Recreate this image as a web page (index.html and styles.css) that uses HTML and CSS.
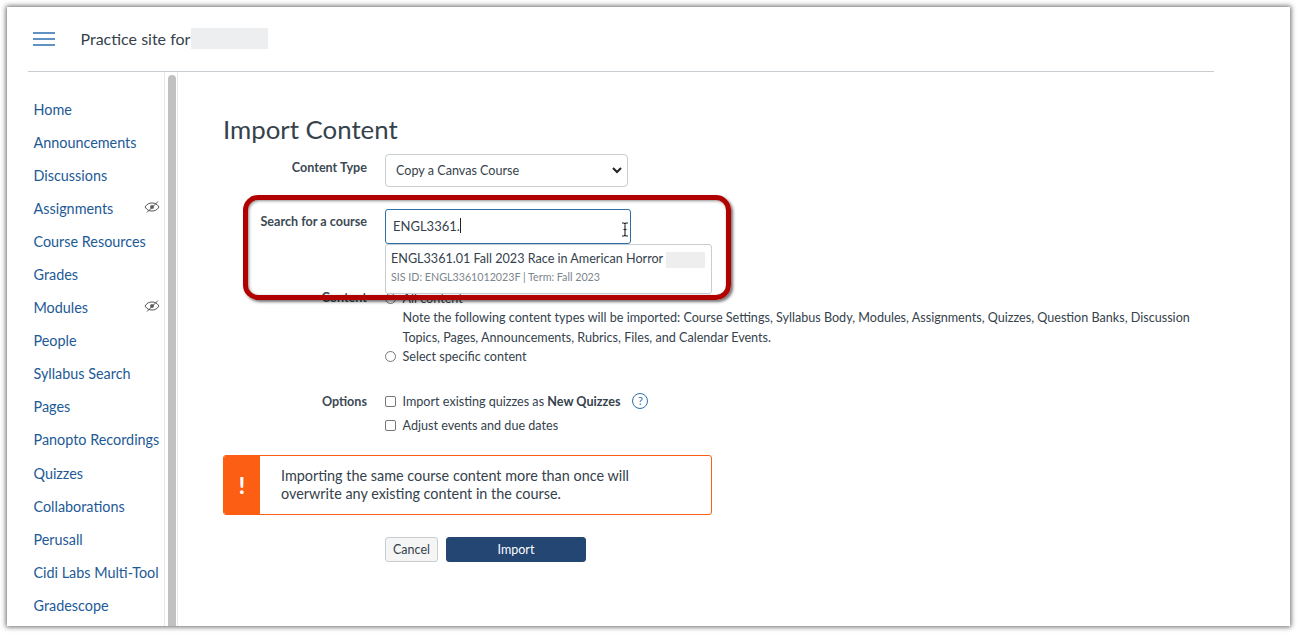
FILE: index.html
```html
<!DOCTYPE html>
<html lang="en">
<head>
<meta charset="utf-8">
<title>Import Content</title>
<link rel="stylesheet" href="styles.css">
</head>
<body>
<div class="window">
  <header class="topbar">
    <svg class="burger" width="22" height="14" viewBox="0 0 22 14"><path d="M0 1h22M0 7h22M0 13h22" stroke="#2d6fb0" stroke-width="1.5" fill="none"/></svg>
    <span class="crumb">Practice site for</span><span class="blur-name"></span>
  </header>
  <div class="layout">
    <nav class="sidebar">
      <a class="nav-item">Home</a>
      <a class="nav-item">Announcements</a>
      <a class="nav-item">Discussions</a>
      <a class="nav-item">Assignments<svg class="eye" width="16" height="14" viewBox="0 0 16 14"><path d="M1 7c2-3 4-4 7-4s5 1 7 4c-2 3-4 4-7 4S3 10 1 7z" fill="none" stroke="#555" stroke-width="1"/><circle cx="8" cy="7" r="2" fill="#666"/><path d="M3 12.500L14 1.500" stroke="#555" stroke-width="1"/></svg></a>
      <a class="nav-item">Course Resources</a>
      <a class="nav-item">Grades</a>
      <a class="nav-item">Modules<svg class="eye" width="16" height="14" viewBox="0 0 16 14"><path d="M1 7c2-3 4-4 7-4s5 1 7 4c-2 3-4 4-7 4S3 10 1 7z" fill="none" stroke="#555" stroke-width="1"/><circle cx="8" cy="7" r="2" fill="#666"/><path d="M3 12.500L14 1.500" stroke="#555" stroke-width="1"/></svg></a>
      <a class="nav-item">People</a>
      <a class="nav-item">Syllabus Search</a>
      <a class="nav-item">Pages</a>
      <a class="nav-item">Panopto Recordings</a>
      <a class="nav-item">Quizzes</a>
      <a class="nav-item">Collaborations</a>
      <a class="nav-item">Perusall</a>
      <a class="nav-item">Cidi Labs Multi-Tool</a>
      <a class="nav-item">Gradescope</a>
    </nav>
    <div class="scrolltrack"><div class="scrollthumb"></div></div>
    <main class="main">
      <h1 class="title">Import Content</h1>
      <div class="row row-type">
        <div class="label">Content Type</div>
        <div class="select">Copy a Canvas Course<svg width="10" height="7" viewBox="0 0 10 7"><path d="M1 1l4 4 4-4" fill="none" stroke="#222" stroke-width="2"/></svg></div>
      </div>
      <div class="row row-search">
        <div class="label">Search for a course</div>
        <div class="search-wrap">
          <div class="input"><span>ENGL3361.</span><i class="caret"></i>
            <svg class="ibeam" width="8" height="15" viewBox="0 0 8 15"><path d="M1 1h2l1 1 1-1h2M4 2v11M1 14h2l1-1 1 1h2M2.500 7.500h3" fill="none" stroke="#222" stroke-width="1.100"/></svg>
          </div>
          <div class="dropdown">
            <div class="dd-title">ENGL3361.01 Fall 2023 Race in American Horror<span class="blur-tag"></span></div>
            <div class="dd-sub">SIS ID: ENGL3361012023F | Term: Fall 2023</div>
          </div>
        </div>
      </div>
      <div class="row row-content">
        <div class="label">Content</div>
        <div class="stack">
          <label class="check"><span class="radio"></span>All content</label>
          <p class="note">Note the following content types will be imported: Course Settings, Syllabus Body, Modules, Assignments, Quizzes, Question Banks, Discussion Topics, Pages, Announcements, Rubrics, Files, and Calendar Events.</p>
          <label class="check"><span class="radio"></span>Select specific content</label>
        </div>
      </div>
      <div class="row row-options">
        <div class="label">Options</div>
        <div class="stack">
          <label class="check"><span class="box"></span>Import existing quizzes as&nbsp;<b>New Quizzes</b><span class="help">?</span></label>
          <label class="check check-adjust"><span class="box"></span>Adjust events and due dates</label>
        </div>
      </div>
      <div class="alert">
        <div class="alert-icon">!</div>
        <div class="alert-text">Importing the same course content more than once will overwrite any existing content in the course.</div>
      </div>
      <div class="actions">
        <button class="btn">Cancel</button>
        <button class="btn primary">Import</button>
      </div>
    </main>
  </div>
  <div class="callout"></div>
</div>
</body>
</html>
```
FILE: styles.css
```css
* { box-sizing: border-box; }
html, body { margin: 0; padding: 0; height: 100%; overflow: hidden; background: #fff; }
body { font-family: Lato, "Liberation Sans", sans-serif; color: #35424c; padding: 7px 7px 6px 7px; }
.window { position: relative; width: 1283px; height: 619px; background: #fff; overflow: hidden; box-shadow: 0 0 5px 1px rgba(0,0,0,.6); }
.topbar { height: 65px; margin-left: 21px; width: 1186px; border-bottom: 1px solid #c7cdd1; display: flex; align-items: center; padding-left: 5px; }
.burger { margin-right: 25.500px; flex: none; }
.crumb { font-size: 16px; margin-top: -2px; }
.blur-name { width: 77px; height: 21px; margin: -2px 0 0 0.500px; background: #eceeef; }
.layout { display: flex; height: 554px; margin-left: 21px; }
.sidebar { width: 137px; padding: 21px 0 0 5.500px; border-right: 1px solid #e6e8ea; flex: none; }
.nav-item { display: flex; justify-content: space-between; height: 33.050px; line-height: 33px; font-size: 14.380px; color: #1d5a96; white-space: nowrap; padding-right: 4.500px; }
.eye { margin-top: 8px; }
.scrolltrack { width: 13px; flex: none; padding: 3px 1px 0 3px; border-right: 1px solid #e6e8ea; }
.scrollthumb { width: 8px; height: 100%; background: #c1c1c1; border-radius: 4px 4px 0 0; }
.main { flex: 1; padding-left: 45px; min-width: 0; }
.title { font-size: 25.800px; font-weight: 400; margin: 41px 0 0; line-height: 32px; height: 32px; }
.row { display: flex; font-size: 12.600px; }
.label { width: 144px; flex: none; text-align: right; font-weight: 700; margin-right: 18px; color: #3c4a54; line-height: 18px; }
.row-type { margin-top: 9px; height: 55px; }
.row-type .label { padding-top: 5px; }
.select { width: 243px; height: 33px; border: 1px solid #c7cdd1; border-radius: 4px; display: flex; align-items: center; justify-content: space-between; padding: 0 5px 0 10px; }
.row-search { height: 81px; }
.row-search .label { padding-top: 4px; white-space: nowrap; }
.search-wrap { position: relative; }
.input { position: relative; width: 246px; height: 35px; border: 1px solid #2d6fa5; border-radius: 3px; display: flex; align-items: center; padding: 0 0 2px 7px; font-size: 13px; }
.caret { width: 1px; height: 15px; background: #222; display: block; }
.ibeam { position: absolute; right: 1.500px; top: 12px; }
.dropdown { position: absolute; left: 0; top: 35px; width: 327px; height: 50px; border: 1px solid #c7cdd1; border-radius: 3px; background: #fff; padding: 5px 5px 0 5px; z-index: 2; }
.dd-title { display: flex; line-height: 18px; white-space: nowrap; }
.blur-tag { width: 39px; height: 16px; background: #eeeeee; margin: 2px 0 0 3px; }
.dd-sub { font-size: 10.700px; color: #7b858c; line-height: 13px; margin-top: 2px; }
.row-content { height: 102px; }
.row-content .label { line-height: 16px; }
.stack { flex: 1; min-width: 0; }
.check { display: flex; align-items: center; height: 16px; white-space: nowrap; }
.radio { width: 11px; height: 11px; border: 1px solid #767676; border-radius: 50%; margin-right: 6.500px; flex: none; }
.box { width: 11px; height: 11px; border: 1px solid #767676; border-radius: 2px; margin-right: 6.500px; flex: none; }
.note { margin: 2px 0 0 17.500px; line-height: 20px; width: 800px; }
.row-options .label { line-height: 16px; padding-top: 2px; }
.row-options { height: 63px; }
.row-options .check { height: 18px; }
.check-adjust { margin-top: 6px; }
.help { width: 16px; height: 16px; border: 1px solid #2d6fa5; border-radius: 50%; color: #2d6fa5; font-size: 11px; line-height: 14px; text-align: center; margin-left: 12px; }
.alert { display: flex; width: 489px; height: 60px; border: 1px solid #fc5e13; border-radius: 3px; overflow: hidden; }
.alert-icon { width: 36px; flex: none; background: #fc5e13; color: #fff; font-weight: 900; font-size: 22px; display: flex; align-items: center; justify-content: center; }
.alert-text { padding: 11px 60px 0 21px; font-size: 14.400px; line-height: 18px; }
.actions { display: flex; gap: 8px; margin: 22px 0 0 162px; }
.btn { height: 25px; font: 12.500px Lato, "Liberation Sans", sans-serif; color: #35424c; background: #f5f5f5; border: 1px solid #c7cdd1; border-radius: 3px; width: 53px; padding: 0 0 1px; }
.primary { width: 140px; background: #234672; border-color: #234672; color: #fff; }
.callout { position: absolute; left: 236px; top: 188px; width: 488px; height: 105px; border: 5px solid #b00000; border-radius: 15px; box-shadow: 2px 2px 3px rgba(0,0,0,.55), inset 1px 1px 3px rgba(0,0,0,.45); z-index: 3; }
```
